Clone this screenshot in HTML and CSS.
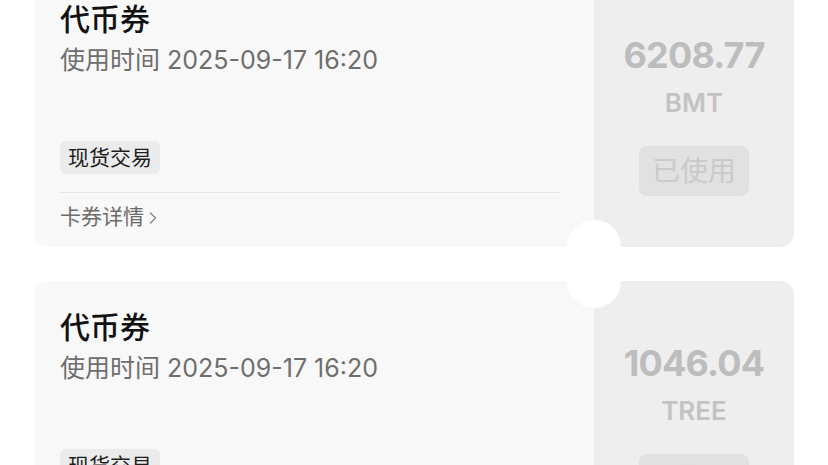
FILE: index.html
```html
<!DOCTYPE html>
<html lang="zh-CN">
<head>
    <meta charset="UTF-8">
    <title>卡券记录</title>
    <link rel="stylesheet" href="styles.css">
</head>
<body>
<div class="list">
    <div class="coupon">
        <div class="coupon-main">
            <div class="coupon-title">代币券</div>
            <div class="coupon-time">使用时间 2025-09-17 16:20</div>
            <div class="coupon-tags"><span class="tag">现货交易</span></div>
            <div class="coupon-foot">
                <span>卡券详情</span>
                <svg class="chevron" width="8" height="14" viewBox="0 0 8 14"><polyline points="1.5,2 6.5,7 1.5,12" fill="none" stroke="#8a8a8a" stroke-width="1.5" stroke-linecap="round" stroke-linejoin="round"/></svg>
            </div>
        </div>
        <div class="coupon-side">
            <div class="amount">6208.77</div>
            <div class="unit">BMT</div>
            <div class="state">已使用</div>
        </div>
    </div>

    <div class="coupon">
        <div class="coupon-main">
            <div class="coupon-title">代币券</div>
            <div class="coupon-time">使用时间 2025-09-17 16:20</div>
            <div class="coupon-tags"><span class="tag">现货交易</span></div>
            <div class="coupon-foot">
                <span>卡券详情</span>
                <svg class="chevron" width="8" height="14" viewBox="0 0 8 14"><polyline points="1.5,2 6.5,7 1.5,12" fill="none" stroke="#8a8a8a" stroke-width="1.5" stroke-linecap="round" stroke-linejoin="round"/></svg>
            </div>
        </div>
        <div class="coupon-side">
            <div class="amount">1046.04</div>
            <div class="unit">TREE</div>
            <div class="state">已使用</div>
        </div>
    </div>
</div>
</body>
</html>
```

FILE: styles.css
```css
body {
    margin: 0;
    background: #fff;
    font-family: Inter, "Noto Sans CJK SC", sans-serif;
    overflow: hidden;
}

/* 列表已滚动一段，第一张卡顶部被裁掉 */
.list {
    margin-top: -27px;
    padding: 0 34px;
    display: flex;
    flex-direction: column;
    gap: 34px;
}

.coupon {
    display: flex;
    height: 274px;
    border-radius: 14px;
    overflow: hidden;
    position: relative;
}

.coupon-main {
    width: 500px;
    padding: 26px 34px 0 26px;
    background: #f8f8f8;
    display: flex;
    flex-direction: column;
}

.coupon-title {
    font-size: 30px;
    line-height: 40px;
    font-weight: 500;
    color: #111;
}

.coupon-time {
    margin-top: 3px;
    font-size: 25px;
    line-height: 36px;
    color: #6e6e6e;
}

.coupon-tags {
    margin-top: 63px;
    display: flex;
}

.tag {
    padding: 0 8px;
    font-size: 21px;
    line-height: 33px;
    color: #1e1e1e;
    background: #ebebeb;
    border-radius: 6px;
}

.coupon-foot {
    margin-top: 18px;
    padding-top: 9px;
    border-top: 1px solid #e6e6e6;
    font-size: 21px;
    line-height: 30px;
    color: #6b6b6b;
    display: flex;
    align-items: center;
    gap: 5px;
}

.chevron {
    margin-top: 2px;
}

.coupon-side {
    flex: 1;
    position: relative;
    background: #eeeeee;
    display: flex;
    flex-direction: column;
    align-items: center;
    padding-top: 60px;
}

/* 票根缺口 */
.coupon-side::before,
.coupon-side::after {
    content: '';
    position: absolute;
    left: -27px;
    width: 54px;
    height: 54px;
    border-radius: 50%;
    background: #fff;
}

.coupon-side::before {
    top: -27px;
}

.coupon-side::after {
    bottom: -27px;
}

.amount {
    font-size: 36px;
    line-height: 44px;
    font-weight: 700;
    letter-spacing: -0.8px;
    color: #bdbdbd;
}

.unit {
    margin-top: 11px;
    font-size: 26px;
    line-height: 30px;
    font-weight: 600;
    color: #c3c3c3;
}

.state {
    margin-top: 28px;
    padding: 0 13px;
    height: 50px;
    line-height: 50px;
    font-size: 28px;
    color: #cacaca;
    background: #e1e1e1;
    border-radius: 8px;
}
```
